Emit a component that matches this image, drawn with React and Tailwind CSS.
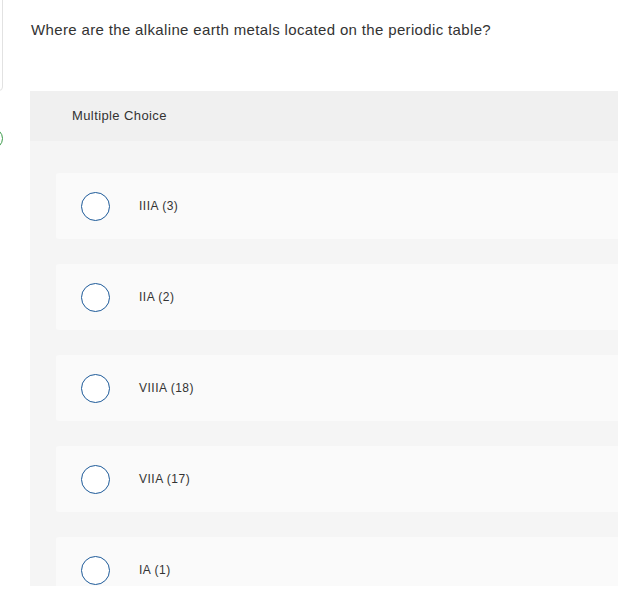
import React from "react";

const choices = ["IIIA (3)", "IIA (2)", "VIIIA (18)", "VIIA (17)", "IA (1)"];

const App = () => {
  return (
    <div
      className="relative w-[618px] h-[595px] overflow-hidden bg-white text-[#333]"
      style={{ fontFamily: '"Liberation Sans", Arial, sans-serif' }}
    >
      {/* left edge bits of the neighbouring panel */}
      <div className="absolute -left-[20px] top-[-10px] w-[23px] h-[101px] rounded-[4px] border border-[#e2e2e2]" />
      <div className="absolute -left-[18px] top-[128px] w-[21px] h-[21px] rounded-full border-[1.5px] border-[#3b9a4a]" />

      {/* Question */}
      <div className="pl-[31px] pt-[20px] h-[91px]">
        <p className="text-[15px] leading-[20px] tracking-[0.35px] text-[#333]">
          Where are the alkaline earth metals located on the periodic table?
        </p>
      </div>

      {/* Answer panel */}
      <div className="ml-[30px] h-[495px] bg-[#f5f5f5] overflow-hidden">
        <div className="h-[50px] bg-[#f0f0f0] flex items-center pl-[42px]">
          <span className="text-[13px] tracking-[0.4px] text-[#333]">Multiple Choice</span>
        </div>

        <div className="pl-[26px] pt-[32px] flex flex-col gap-[25px]">
          {choices.map((c) => (
            <div
              key={c}
              className="h-[66px] shrink-0 bg-[#fafafa] rounded-l-[3px] flex items-center"
            >
              <div className="ml-[25px] w-[29px] h-[29px] rounded-full border-[1.5px] border-[#1d5a99] bg-white" />
              <span className="ml-[29px] text-[12px] tracking-[0.5px] text-[#333]">{c}</span>
            </div>
          ))}
        </div>
      </div>
    </div>
  );
};

export default App;
